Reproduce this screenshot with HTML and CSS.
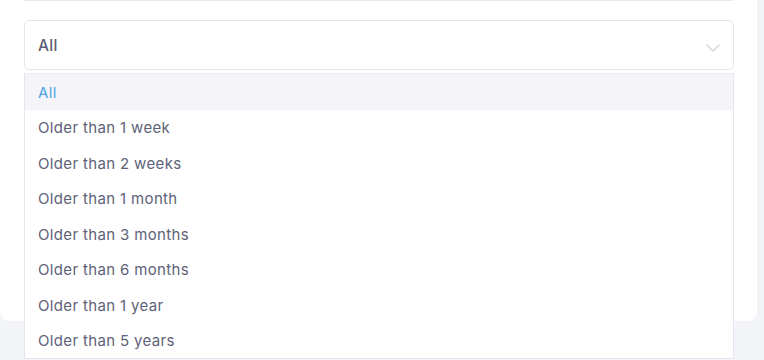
FILE: index.html
```html
<!DOCTYPE html>
<html>
<head>
<meta charset="utf-8">
<link rel="stylesheet" href="styles.css">
</head>
<body>
<div class="card">
  <div class="divider"></div>
  <div class="field">
    <div class="select">
      <span class="value">All</span>
      <svg class="chevron" width="14" height="8" viewBox="0 0 14 8"><path d="M1 1l6 6 6-6" fill="none" stroke="#d6d7e4" stroke-width="1.5" stroke-linecap="round" stroke-linejoin="round"/></svg>
    </div>
    <ul class="menu">
      <li class="option selected">All</li>
      <li class="option">Older than 1 week</li>
      <li class="option">Older than 2 weeks</li>
      <li class="option">Older than 1 month</li>
      <li class="option">Older than 3 months</li>
      <li class="option">Older than 6 months</li>
      <li class="option">Older than 1 year</li>
      <li class="option">Older than 5 years</li>
    </ul>
  </div>
</div>
</body>
</html>
```
FILE: styles.css
```css
html, body {
  margin: 0;
  padding: 0;
  height: 360px;
  background: #f3f4f8;
  font-family: "Inter", "Open Sans", sans-serif;
}
.card {
  width: 757px;
  height: 321px;
  background: #ffffff;
  border-radius: 0 0 9px 9px;
  box-sizing: border-box;
  padding: 0 23px 0 24px;
}
.divider {
  height: 1px;
  background: #e6e7f0;
  margin-right: 1px;
}
.field {
  position: relative;
  margin-top: 19px;
}
.select {
  height: 50px;
  box-sizing: border-box;
  border: 1px solid #e4e6ef;
  border-radius: 5px;
  display: flex;
  align-items: center;
  justify-content: space-between;
  padding: 0 13px 0 13px;
}
.value {
  font-size: 15.5px;
  font-weight: 500;
  color: #5b5e72;
  letter-spacing: 0.3px;
}
.chevron {
  margin-top: 5px;
}
.menu {
  position: absolute;
  z-index: 2;
  left: 0;
  right: 0;
  top: 53px;
  margin: 0;
  padding: 0;
  list-style: none;
  background: #ffffff;
  border: 1px solid #e4e6ef;
  border-top-color: #e8e9f1;
}
.option {
  height: 35.5px;
  display: flex;
  align-items: center;
  padding: 0 13px;
  padding-top: 1px;
  box-sizing: border-box;
  font-size: 15px;
  color: #5e6278;
  letter-spacing: 0.35px;
}
.option.selected {
  background: #f5f5f9;
  color: #4da3e4;
}
```
